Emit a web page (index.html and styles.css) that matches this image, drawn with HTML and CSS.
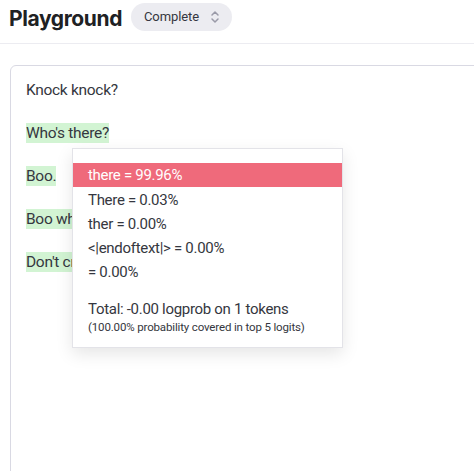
FILE: index.html
```html
<!DOCTYPE html>
<html>
<head>
<meta charset="utf-8">
<link rel="stylesheet" href="styles.css">
</head>
<body>
<header class="topbar">
  <h1 class="title">Playground</h1>
  <div class="mode-pill">
    <span>Complete</span>
    <svg class="chev" width="10" height="14" viewBox="0 0 10 14" fill="none" stroke="currentColor" stroke-width="1.5" stroke-linecap="round" stroke-linejoin="round"><path d="M2 5 L5 2 L8 5"/><path d="M2 9 L5 12 L8 9"/></svg>
  </div>
</header>
<main class="main">
  <section class="editor">
    <div class="doc"><p class="line">Knock knock?</p><p class="line"><span class="hl">Who's there?</span></p><p class="line"><span class="hl">Boo.</span></p><p class="line"><span class="hl">Boo who?</span></p><p class="line"><span class="hl">Don't cry, it's only a joke.</span></p></div>
    <div class="popup">
      <ul class="probs">
        <li class="prob active">there = 99.96%</li>
        <li class="prob">There = 0.03%</li>
        <li class="prob">ther = 0.00%</li>
        <li class="prob">&lt;|endoftext|&gt; = 0.00%</li>
        <li class="prob">= 0.00%</li>
      </ul>
      <div class="total">Total: -0.00 logprob on 1 tokens</div>
      <div class="note">(100.00% probability covered in top 5 logits)</div>
    </div>
  </section>
</main>
</body>
</html>
```
FILE: styles.css
```css
* { box-sizing: border-box; }
html, body { margin: 0; padding: 0; background: #fff; overflow: hidden; }
body {
  font-family: Roboto, "Liberation Sans", Arial, sans-serif;
  color: #353740;
  width: 474px;
  height: 471px;
}
.topbar {
  display: flex;
  align-items: center;
  gap: 9px;
  height: 44px;
  padding: 0 0 0 9px;
  border-bottom: 1px solid #ececf1;
}
.title {
  margin: 0;
  font-family: Inter, "Liberation Sans", Arial, sans-serif;
  font-size: 21px;
  font-weight: 700;
  letter-spacing: -0.4px;
  color: #202123;
  position: relative;
  top: -3px;
}
.mode-pill {
  display: flex;
  align-items: center;
  gap: 11px;
  height: 28px;
  padding: 0 12px 0 13px;
  background: #ececf1;
  border-radius: 14px;
  font-size: 13px;
  letter-spacing: -0.1px;
  color: #353740;
  position: relative;
  top: -5px;
}
.chev { color: #9a9aa8; }
.main {
  padding: 21px 0 0 10px;
}
.editor {
  position: relative;
  width: 480px;
  height: 440px;
  border: 1px solid #d9d9e3;
  border-radius: 6px;
  padding: 14px 0 0 15px;
}
.doc { font-size: 15.5px; letter-spacing: -0.3px; }
.line {
  margin: 0 0 21.5px 0;
  line-height: 21.5px;
  white-space: nowrap;
}
.hl { background: #d2f4d3; padding: 1px 0; }
.popup {
  position: absolute;
  left: 61px;
  top: 82px;
  width: 271px;
  background: #fff;
  border: 1px solid #e3e3e8;
  box-shadow: 0 6px 16px rgba(0,0,0,0.10);
  padding: 14px 0 12px 0;
  letter-spacing: -0.3px;
}
.probs { list-style: none; margin: 0; padding: 0; }
.prob {
  height: 24px;
  line-height: 24px;
  padding-left: 15px;
  font-size: 15px;
}
.prob.active { background: #ef6a7b; color: #fff; }
.prob.active + .prob { margin-top: 1px; }
.total {
  margin-top: 16px;
  padding-left: 15px;
  font-size: 15px;
  line-height: 19px;
}
.note {
  padding-left: 15px;
  font-size: 11.5px;
  line-height: 16px;
  letter-spacing: -0.15px;
}
```
